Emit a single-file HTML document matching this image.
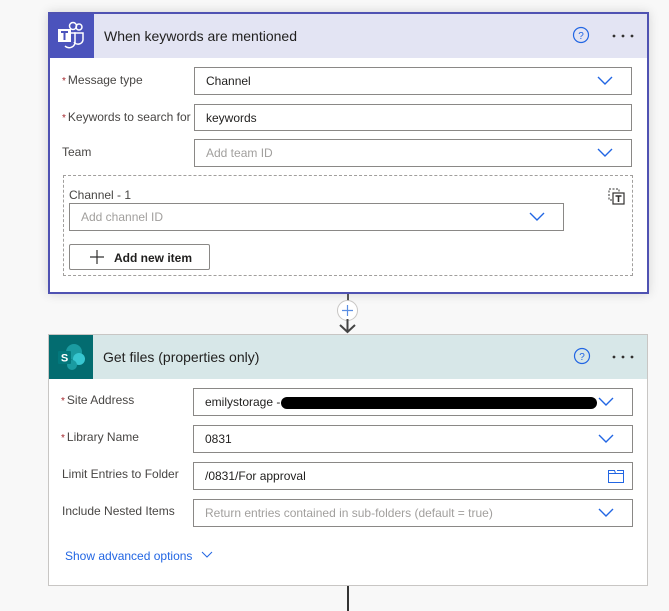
<!DOCTYPE html>
<html><head><style>
*{box-sizing:border-box;margin:0;padding:0}
body{width:669px;height:611px;background:#f8f8f8;font-family:"Liberation Sans",sans-serif;font-size:12px;color:#323130;position:relative;overflow:hidden}
.a{position:absolute}
.inp{position:absolute;border:1px solid #8a8886;background:#fff;height:28px;padding:0 0 0 11px;line-height:26px;font-size:12px;color:#201f1e}
.ph{color:#a19f9d}
.lbl{position:absolute;font-size:12px;color:#484644}
.req{color:#a4262c;font-size:10px;margin-right:2px}
.chev{position:absolute;right:18px;top:8px}
</style></head><body>
<!-- card 1 -->
<div class="a" style="left:48px;top:12px;width:601px;height:282px;border:2px solid #4f52b2;background:#fff;box-shadow:0 0 10px rgba(0,0,0,.15)"></div>
<div class="a" style="left:50px;top:14px;width:597px;height:44px;background:#e3e4f3"></div>
<div class="a" style="left:50px;top:14px;width:44px;height:44px;background:#4b53bc">
<svg width="44" height="44" viewBox="0 0 44 44"><circle cx="29" cy="13" r="3" fill="none" stroke="#fff" stroke-width="1.5"/><path d="M24 19h9v7a5 5 0 0 1-9 2" fill="none" stroke="#fff" stroke-width="1.5"/><circle cx="23" cy="12" r="3.5" fill="none" stroke="#fff" stroke-width="1.5"/><path d="M16 19h9v10a6 6 0 0 1-10 3" fill="none" stroke="#fff" stroke-width="1.5"/><rect x="8" y="15" width="13" height="13" fill="#fff"/><path d="M11 18h7M14.5 18v8" stroke="#4b53bc" stroke-width="2"/></svg></div>
<div class="a" style="left:104px;top:28px;font-size:14px;color:#201f1e">When keywords are mentioned</div>
<svg class="a" style="left:572px;top:26px" width="18" height="18"><circle cx="9" cy="9" r="7.5" fill="none" stroke="#2266e3" stroke-width="1.2"/><text x="9" y="13" font-size="10" text-anchor="middle" fill="#2266e3" font-family="Liberation Sans">?</text></svg>
<svg class="a" style="left:610px;top:32px" width="26" height="8"><circle cx="4" cy="4" r="1.4" fill="#323130"/><circle cx="13" cy="4" r="1.4" fill="#323130"/><circle cx="22" cy="4" r="1.4" fill="#323130"/></svg>
<div class="lbl" style="left:62px;top:73px"><span class="req">*</span>Message type</div>
<div class="inp" style="left:194px;top:67px;width:438px">Channel<svg class="chev" width="16" height="10"><path d="M1 1l7 7 7-7" fill="none" stroke="#2266e3" stroke-width="1.4"/></svg></div>
<div class="lbl" style="left:62px;top:110px"><span class="req">*</span>Keywords to search for</div>
<div class="inp" style="left:194px;top:104px;width:438px;height:27px">keywords</div>
<div class="lbl" style="left:62px;top:145px">Team</div>
<div class="inp ph" style="left:194px;top:139px;width:438px">Add team ID<svg class="chev" width="16" height="10"><path d="M1 1l7 7 7-7" fill="none" stroke="#2266e3" stroke-width="1.4"/></svg></div>
<div class="a" style="left:63px;top:175px;width:570px;height:101px;border:1px dashed #a19f9d"></div>
<div class="lbl" style="left:69px;top:188px">Channel - 1</div>
<div class="inp ph" style="left:69px;top:203px;width:495px">Add channel ID<svg class="chev" width="16" height="10"><path d="M1 1l7 7 7-7" fill="none" stroke="#2266e3" stroke-width="1.4"/></svg></div>
<svg class="a" style="left:608px;top:188px" width="18" height="18"><rect x="1" y="1" width="10" height="11" fill="none" stroke="#323130" stroke-dasharray="2 1.5"/><rect x="5" y="5" width="11" height="11" fill="#fff" stroke="#323130" stroke-width="1.2"/><path d="M7.5 8h6M10.5 8v6" stroke="#323130" stroke-width="1.6"/></svg>
<div class="a" style="left:69px;top:244px;width:141px;height:26px;border:1px solid #8a8886;background:#fff;border-radius:2px"></div>
<svg class="a" style="left:89px;top:249px" width="16" height="16"><path d="M8 1v14M1 8h14" stroke="#323130" stroke-width="1.2"/></svg>
<div class="a" style="left:114px;top:251px;font-weight:bold;color:#201f1e;font-size:12px">Add new item</div>
<!-- connector -->
<div class="a" style="left:347px;top:294px;width:1.5px;height:7px;background:#555"></div>
<div class="a" style="left:337px;top:300px;width:21px;height:21px;border:1.5px solid #c8c6c4;border-radius:50%;background:#fff"></div>
<svg class="a" style="left:337px;top:300px" width="21" height="21"><path d="M10.5 5v11M5 10.5h11" stroke="#5b8ee3" stroke-width="1.2"/></svg>
<svg class="a" style="left:338px;top:319px" width="20" height="15"><path d="M9.5 0v13M2 6l7.5 7 7.5-7" fill="none" stroke="#444" stroke-width="2"/></svg>
<!-- card 2 -->
<div class="a" style="left:48px;top:334px;width:600px;height:252px;border:1px solid #c8c6c4;background:#fff"></div>
<div class="a" style="left:49px;top:335px;width:598px;height:44px;background:#d7e7e8"></div>
<div class="a" style="left:49px;top:335px;width:44px;height:44px;background:#036c70">
<svg width="44" height="44"><circle cx="25" cy="17" r="8" fill="#1a9ba1"/><circle cx="30" cy="24" r="6" fill="#37c6d0"/><circle cx="23" cy="30" r="5" fill="#1a9ba1"/><rect x="9" y="16" width="13" height="13" rx="1" fill="#03787c"/><text x="15.5" y="26.5" font-size="11" font-weight="bold" text-anchor="middle" fill="#fff" font-family="Liberation Sans">S</text></svg></div>
<div class="a" style="left:103px;top:349px;font-size:14px;color:#201f1e">Get files (properties only)</div>
<svg class="a" style="left:573px;top:347px" width="18" height="18"><circle cx="9" cy="9" r="7.5" fill="none" stroke="#2266e3" stroke-width="1.2"/><text x="9" y="13" font-size="10" text-anchor="middle" fill="#2266e3" font-family="Liberation Sans">?</text></svg>
<svg class="a" style="left:610px;top:353px" width="26" height="8"><circle cx="4" cy="4" r="1.4" fill="#323130"/><circle cx="13" cy="4" r="1.4" fill="#323130"/><circle cx="22" cy="4" r="1.4" fill="#323130"/></svg>
<div class="lbl" style="left:61px;top:393px"><span class="req">*</span>Site Address</div>
<div class="inp" style="left:193px;top:388px;width:440px">emilystorage -<svg class="chev" width="16" height="10"><path d="M1 1l7 7 7-7" fill="none" stroke="#2266e3" stroke-width="1.4"/></svg></div>
<div class="a" style="left:281px;top:397px;width:316px;height:12px;background:#000;border-radius:6px"></div>
<div class="lbl" style="left:61px;top:430px"><span class="req">*</span>Library Name</div>
<div class="inp" style="left:193px;top:425px;width:440px">0831<svg class="chev" width="16" height="10"><path d="M1 1l7 7 7-7" fill="none" stroke="#2266e3" stroke-width="1.4"/></svg></div>
<div class="lbl" style="left:62px;top:467px">Limit Entries to Folder</div>
<div class="inp" style="left:193px;top:462px;width:440px">/0831/For approval<svg class="a" style="right:8px;top:7px" width="16" height="13"><path d="M0.5 3.5h15v9h-15zM0.5 3.5v-3h6l1 3M9 0.5h6.5v3" fill="none" stroke="#2266e3" stroke-width="1"/></svg></div>
<div class="lbl" style="left:62px;top:504px">Include Nested Items</div>
<div class="inp ph" style="left:193px;top:499px;width:440px">Return entries contained in sub-folders (default = true)<svg class="chev" width="16" height="10"><path d="M1 1l7 7 7-7" fill="none" stroke="#2266e3" stroke-width="1.4"/></svg></div>
<div class="a" style="left:65px;top:549px;color:#2266e3;font-size:12px">Show advanced options</div>
<svg class="a" style="left:201px;top:551px" width="12" height="8"><path d="M1 1l5 5 5-5" fill="none" stroke="#2266e3" stroke-width="1"/></svg>
<div class="a" style="left:347px;top:586px;width:1.5px;height:25px;background:#333"></div>
</body></html>
